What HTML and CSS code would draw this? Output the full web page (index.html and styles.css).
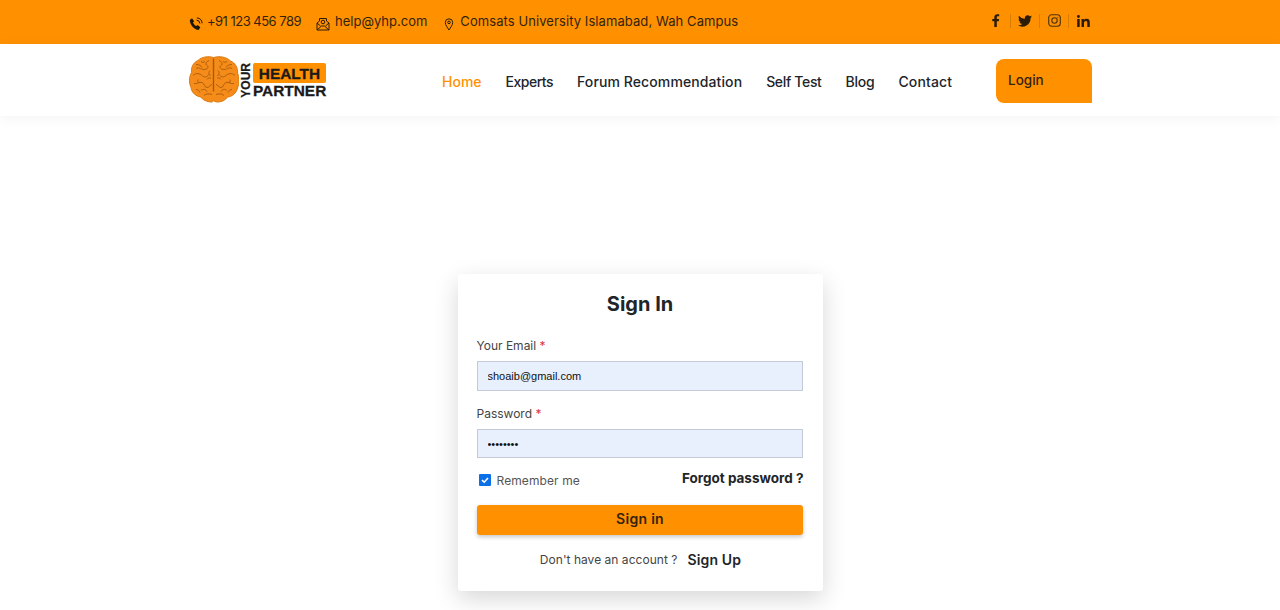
FILE: index.html
```html
<!DOCTYPE html>
<html lang="en">
<head>
<meta charset="utf-8">
<title>Sign In</title>
<link rel="stylesheet" href="styles.css">
</head>
<body>
<div class="topbar">
  <div class="container topbar-in">
    <ul class="contact">
      <li class="c1"><svg class="ci" width="14" height="14" viewBox="0 0 14 14"><path d="M.8 3 3 1.200l2.200 3-1.200 1.200c.5 1.500 1.700 2.800 3.300 3.700l1.300-1.100 2.800 2.300-1.800 2.600C5.300 12.900.8 7.900.8 3Z" fill="#1f1505"/><path d="M7.600 3.100a3.600 3.600 0 0 1 3.300 3.400M7.900 .9a5.700 5.700 0 0 1 5.200 5.400" fill="none" stroke="#1f1505" stroke-width="1"/></svg><span class="phone">+91 123 456 789</span></li>
      <li class="c2"><svg class="ci" width="14" height="14" viewBox="0 0 14 14" fill="none" stroke="#2a1c08" stroke-width="1"><path d="M1 6v7h12V6L10.500 4V1.500h-7V4Z"/><path d="m1 13 4.500-4h3l4.500 4M1 6l3.500 3M13 6 9.500 9"/><circle cx="7" cy="5" r="1.800"/></svg><span>help@yhp.com</span></li>
      <li class="c3"><svg class="ci" width="12" height="14" viewBox="0 0 12 14" fill="none" stroke="#2a1c08" stroke-width="1"><path d="M6 13C4.500 10.500 2.300 8 2.300 5.500a3.700 3.700 0 0 1 7.400 0C9.700 8 7.500 10.500 6 13Z"/><circle cx="6" cy="5.400" r="1.300"/></svg><span class="addr">Comsats University Islamabad, Wah Campus</span></li>
    </ul>
    <ul class="social">
      <li><svg width="8" height="13" viewBox="0 0 8 13"><path d="M2.300 13V7.200H.3V5h2V3.300C2.300 1.200 3.500.2 5.300.2c.9 0 1.600.1 1.900.1v2H6c-1 0-1.200.5-1.200 1.200V5h2.300l-.3 2.200H4.800V13Z" fill="#2a1c08"/></svg></li>
      <li><svg width="14" height="12" viewBox="0 0 24 20"><path d="M24 2.400c-.9.400-1.800.7-2.800.8 1-.6 1.800-1.600 2.200-2.700-1 .6-2 1-3.100 1.200A4.900 4.900 0 0 0 11.900 6.200C7.800 6 4.200 4 1.700.9c-1.300 2.200-.7 5.100 1.500 6.600-.8 0-1.600-.2-2.200-.6 0 2.400 1.700 4.400 3.900 4.900-.7.200-1.500.2-2.200.1.600 1.900 2.400 3.300 4.600 3.400A9.900 9.900 0 0 1 0 17.300 14 14 0 0 0 21.500 4.900c1-.7 1.800-1.500 2.500-2.500Z" fill="#2a1c08"/></svg></li>
      <li><svg width="13" height="13" viewBox="0 0 13 13" fill="none" stroke="#4a3208" stroke-width="1.100"><rect x=".7" y=".7" width="11.600" height="11.600" rx="3"/><circle cx="6.500" cy="6.500" r="2.700"/><circle cx="9.800" cy="3.200" r=".5" fill="#4a3208" stroke="none"/></svg></li>
      <li><svg width="13" height="12" viewBox="0 0 13 12"><path d="M.2 4h2.500v8H.2ZM1.450 0a1.400 1.400 0 1 1 0 2.900 1.400 1.400 0 0 1 0-2.900ZM4.500 4h2.400v1.100C7.300 4.400 8.200 3.800 9.500 3.800c2.600 0 3.300 1.600 3.300 3.900V12h-2.500V8.200c0-1-.1-2.200-1.400-2.200S7 7 7 8.200V12H4.500Z" fill="#2a1c08"/></svg></li>
    </ul>
  </div>
</div>
<header class="navbar">
  <div class="container nav-in">
    <a class="logo" href="#">
      <svg class="brain" width="50" height="49" viewBox="0 0 50 48">
        <path d="M24.500 2C20 .5 13 1 9 5 4 7 2 12 2.500 17 0 21 0 28 2 32c.5 5 5 9 10 9.500 1 2.500 6 5 10.500 5 1.500 0 2-1 2-2 0 1 2 2 4 2 4.500 0 8-2 10-5 5-.5 9-4 10-9 2-4 2-11 0-15 .5-5-2-10-7-12C37 1 30 .5 24.500 2Z" fill="#f58c1a" stroke="#d97a10" stroke-width="1"/>
        <g fill="none" stroke="#a85a0c" stroke-width=".9">
          <path d="M24.500 3v33" stroke-width="1.400"/>
          <path d="M20 5c-3 1-4 4-2 5s1 4-3 4-5-3-8-1M7 9c3 0 5 1 6 3M4 20c3-3 7-2 9 0s5 2 7-1M21 15c-2 2-1 5 1 5M5 28c3 1 5-2 8-1s2 5 5 5 3-3 5-3M9 24c-1 2 0 3 2 3M12 35c2-2 5-1 6 1M7 34c2 0 3 1 4 3M15 40c2-2 5-2 8-1M12 6c1 1 3 1 4 0M18 24c1-2 3-2 4-1"/>
          <path d="M30 5c3 1 4 4 2 5s-1 4 3 4 5-3 8-1M43 9c-3 0-5 1-6 3M46 20c-3-3-7-2-9 0s-5 2-7-1M29 15c2 2 1 5-1 5M45 28c-3 1-5-2-8-1s-2 5-5 5-3-3-5-3M41 24c1 2 0 3-2 3M38 35c-2-2-5-1-6 1M43 34c-2 0-3 1-4 3M35 40c-2-2-5-2-8-1M38 6c-1 1-3 1-4 0M32 24c-1-2-3-2-4-1"/>
        </g>
      </svg>
      <span class="logo-your">YOUR</span>
      <span class="logo-words">
        <span class="logo-health">HEALTH</span>
        <span class="logo-partner">PARTNER</span>
      </span>
    </a>
    <nav class="menu">
      <a class="active" href="#">Home</a>
      <a class="m-experts" href="#">Experts</a>
      <a class="m-forum" href="#">Forum Recommendation</a>
      <a class="m-self" href="#">Self Test</a>
      <a class="m-blog" href="#">Blog</a>
      <a class="m-contact" href="#">Contact</a>
    </nav>
    <a class="login" href="#">Login</a>
  </div>
</header>
<main class="page">
  <form class="card">
    <h1>Sign In</h1>
    <label class="lbl" for="email">Your Email <b>*</b></label>
    <input class="field" id="email" type="text" value="shoaib@gmail.com">
    <label class="lbl lbl2" for="pw">Password <b>*</b></label>
    <input class="field" id="pw" type="password" value="12345678">
    <div class="row">
      <label class="remember"><span class="check"><svg width="10" height="10" viewBox="0 0 10 10"><path d="m2 5.200 2.200 2L8 3" fill="none" stroke="#fff" stroke-width="1.600"/></svg></span>Remember me</label>
      <a class="forgot" href="#">Forgot password ?</a>
    </div>
    <button class="submit" type="button">Sign in</button>
    <p class="alt"><span>Don't have an account ?</span><a href="#">Sign Up</a></p>
  </form>
</main>
</body>
</html>
```

FILE: styles.css
```css
* { box-sizing: border-box; }
html, body { margin: 0; padding: 0; }
body {
  height: 610px;
  overflow: hidden;
  background: #fff;
  color: #212529;
  font-family: Inter, "Noto Sans", sans-serif;
}
a { color: inherit; text-decoration: none; }
ul { list-style: none; margin: 0; padding: 0; }

.container { width: 920px; margin: 0 auto; padding: 0 8px 0 9px; display: flex; align-items: center; }

.topbar { height: 44px; background: #ff9100; }
.topbar-in { height: 100%; justify-content: space-between; }
.contact { display: flex; align-items: center; font-size: 13px; color: #33230c; }
.contact li { display: flex; align-items: center; }
.contact span { position: relative; top: -1px; }
.ci { margin-right: 4px; position: relative; top: 2px; }
.phone { letter-spacing: -.52px; }
.addr { letter-spacing: .08px; }
.c1 { margin-right: 15px; }
.c2 { margin-right: 16px; }
.c2 .ci { margin-right: 5px; }
.c3 .ci { margin-right: 5px; }
.social { display: flex; align-items: center; height: 14px; margin-top: -3px; margin-right: -5px; }
.social li { display: flex; align-items: center; justify-content: center; width: 29px; height: 14px; border-left: 1px solid #d97c04; }
.social li:first-child { border-left: 0; }

.navbar { height: 72px; background: #fff; box-shadow: 0 2px 12px rgba(0, 0, 0, .05); position: relative; }
.nav-in { height: 100%; }
.logo { display: flex; align-items: center; width: 253px; height: 48px; margin-top: 1px; color: #1a1a1a; }
.brain { flex: none; margin-top: -3px; }
.logo-your {
  writing-mode: vertical-rl;
  transform: rotate(180deg);
  font: 700 12px/11px "Liberation Sans", sans-serif;
  -webkit-text-stroke: .25px #1a1a1a;
  margin-left: 2px;
  margin-right: 1px;
}
.logo-words { display: flex; flex-direction: column; font-family: "Liberation Sans", sans-serif; font-weight: 700; font-size: 15.400px; line-height: 16px; -webkit-text-stroke: .3px #1a1a1a; }
.logo-health { background: #ff9100; border-radius: 2px; height: 20px; line-height: 21px; width: 73px; text-align: center; }
.logo-partner { height: 15px; line-height: 15px; }
.menu { display: flex; gap: 24px; font-size: 14px; font-weight: 500; color: #212529; margin-top: 3px; }
.menu .active { color: #ff9100; }
.m-experts { letter-spacing: -.5px; }
.m-forum { letter-spacing: .1px; }
.m-self { letter-spacing: -.34px; }
.m-blog { letter-spacing: -.25px; }
.m-contact { letter-spacing: .15px; }
.login {
  margin-left: auto;
  width: 96px;
  height: 44px;
  margin-top: 1px;
  padding-left: 12px;
  line-height: 42px;
  background: #ff9100;
  border-radius: 8px 8px 0 8px;
  font-size: 13.500px;
  font-weight: 500;
  color: #33230c;
}

.page { display: flex; justify-content: center; padding-top: 158px; }
.card {
  width: 365px;
  height: 317px;
  padding: 16px 20px 0 19px;
  background: #fff;
  border-radius: 3px;
  box-shadow: 0 8px 24px rgba(0, 0, 0, .16);
}
.card h1 { margin: 0 0 18px; height: 28px; font-size: 20px; line-height: 28px; font-weight: 700; text-indent: 1px; text-align: center; color: #212529; }
.lbl { display: block; height: 20px; font-size: 12px; line-height: 20px; font-weight: 400; color: #444; margin-bottom: 5px; }
.lbl b { color: #dc3545; font-weight: 400; }
.lbl2 { margin-top: 13px; margin-bottom: 5px; }
.field {
  display: block;
  width: 100%;
  height: 30px;
  padding: 0 10px;
  background: #e8f0fe;
  border: 1px solid #c5cbd6;
  border-radius: 0;
  font: 11px "Liberation Sans", sans-serif;
  color: #111;
  outline: 0;
}
#pw { height: 29px; }
.row { display: flex; justify-content: space-between; align-items: center; height: 24px; margin-top: 9px; }
.remember { display: flex; align-items: center; font-size: 12px; letter-spacing: .1px; color: #555; margin-left: 2px; position: relative; top: 1px; }
.check { width: 12px; height: 12px; margin-right: 6px; background: #0b6fe8; border-radius: 1px; display: flex; align-items: center; justify-content: center; }
.forgot { font-size: 13.500px; font-weight: 700; color: #212529; position: relative; top: -1px; left: 1px; }
.submit {
  display: block;
  width: 100%;
  height: 30px;
  margin-top: 14px;
  padding: 0 0 3px 1px;
  border: 0;
  border-radius: 3px;
  background: #ff9100;
  box-shadow: 0 2px 4px rgba(0, 0, 0, .22);
  font: 600 14px Inter, sans-serif;
  letter-spacing: .3px;
  color: #33230c;
}
.alt { display: flex; justify-content: center; align-items: center; gap: 10px; margin: 14px 0 0; padding-left: 2px; font-size: 12px; letter-spacing: .03px; color: #444; height: 20px; }
.alt a { font-size: 14px; font-weight: 600; letter-spacing: .15px; color: #212529; }
```
